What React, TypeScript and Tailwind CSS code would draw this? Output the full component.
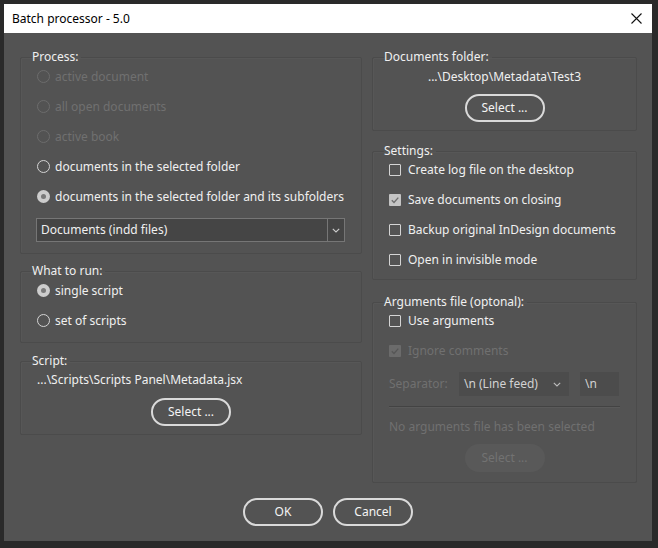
import React from "react";

const FONT = { fontFamily: '"Noto Sans", "Open Sans", Arial, sans-serif' };

function Chevron({ color = "#cfcfcf" }: { color?: string }) {
  return (
    <svg width="8" height="5" viewBox="0 0 8 5" fill="none">
      <path d="M0.8 0.8 L4 4 L7.2 0.8" stroke={color} strokeWidth="1.1" />
    </svg>
  );
}

function Radio({ label, checked = false, disabled = false }: { label: string; checked?: boolean; disabled?: boolean }) {
  return (
    <div className="flex h-[20px] items-center gap-[5px] pt-[1px]">
      {checked ? (
        <span className="flex h-[13px] w-[13px] items-center justify-center rounded-full bg-[#cdcdcd]">
          <span className="h-[5px] w-[5px] rounded-full bg-[#7a7a7a]" />
        </span>
      ) : (
        <span
          className={
            "h-[13px] w-[13px] rounded-full border " +
            (disabled ? "border-[#6c6c6c]" : "border-[#d4d4d4]")
          }
        />
      )}
      <span className={disabled ? "text-[#707070]" : "text-[#f0f0f0]"}>{label}</span>
    </div>
  );
}

function Check({ label, checked = false, disabled = false }: { label: string; checked?: boolean; disabled?: boolean }) {
  return (
    <div className="flex h-[20px] items-center gap-[7px] pt-[1px]">
      {checked ? (
        <span
          className={
            "flex h-[12px] w-[12px] items-center justify-center rounded-[1px] " +
            (disabled ? "bg-[#6b6b6b]" : "bg-[#c4c4c4]")
          }
        >
          <svg width="10" height="10" viewBox="0 0 10 10" fill="none">
            <path
              d="M1.8 5.2 L4 7.4 L8.3 2.6"
              stroke={disabled ? "#575757" : "#6e6e6e"}
              strokeWidth="1.4"
            />
          </svg>
        </span>
      ) : (
        <span className="h-[12px] w-[12px] rounded-[1px] border border-[#d4d4d4]" />
      )}
      <span className={disabled ? "text-[#707070]" : "text-[#f0f0f0]"}>{label}</span>
    </div>
  );
}

function Pill({ children, disabled = false }: { children: React.ReactNode; disabled?: boolean }) {
  return disabled ? (
    <div className="flex h-[28px] w-[80px] items-center justify-center rounded-full bg-[#595959] text-[#727272]">
      {children}
    </div>
  ) : (
    <div className="flex h-[28px] w-[80px] items-center justify-center rounded-full border-2 border-[#dadada] text-[#f4f4f4]">
      {children}
    </div>
  );
}

function Panel({
  title,
  className = "",
  children,
}: {
  title: string;
  className?: string;
  children: React.ReactNode;
}) {
  return (
    <fieldset
      className={
        "rounded-[2px] border border-[#4b4b4b] px-[16px] shadow-[inset_1px_1px_0_#575757] " + className
      }
    >
      <legend className="-ml-[5px] pr-[3px] leading-[16px] text-[#f0f0f0]">{title}</legend>
      {children}
    </fieldset>
  );
}

export default function App() {
  return (
    <div
      className="flex h-[548px] w-[658px] bg-[#2a2a2a] pb-[7px] pl-[4px] pr-[6px] pt-[4px] text-[12px] leading-[16px]"
      style={FONT}
    >
      <div className="flex flex-1 flex-col bg-[#535353]">
        {/* Title bar */}
        <div className="flex h-[29px] items-center justify-between bg-white pl-[8px] pr-[10px] text-[12px] text-black">
          <span>Batch processor - 5.0</span>
          <svg width="11" height="11" viewBox="0 0 11 11" fill="none">
            <path d="M0.5 0.5 L10.5 10.5 M10.5 0.5 L0.5 10.5" stroke="#111" strokeWidth="1.1" />
          </svg>
        </div>

        {/* Body */}
        <div className="flex gap-[10px] pl-[16px] pr-[15px] pt-[16px]">
          {/* Left column */}
          <div className="flex w-[342px] flex-col">
            <Panel title="Process:" className="pb-[11px]">
              <div className="flex flex-col gap-[10px] pt-[1px]">
                <Radio label="active document" disabled />
                <Radio label="all open documents" disabled />
                <Radio label="active book" disabled />
                <Radio label="documents in the selected folder" />
                <Radio label="documents in the selected folder and its subfolders" checked />
              </div>
              <div className="-ml-px mt-[12px] flex h-[24px] border border-[#767676] bg-[#454545]">
                <div className="flex flex-1 items-center pl-[4px] text-[#f0f0f0]">Documents (indd files)</div>
                <div className="flex w-[17px] items-center justify-center border-l border-[#767676]">
                  <Chevron />
                </div>
              </div>
            </Panel>

            <Panel title="What to run:" className="mt-[9px] pb-[12px]">
              <div className="flex flex-col gap-[10px] pt-[1px]">
                <Radio label="single script" checked />
                <Radio label="set of scripts" />
              </div>
            </Panel>

            <Panel title="Script:" className="mt-[10px] pb-[8px]">
              <div className="flex h-[20px] items-center pt-[2px] text-[#f0f0f0]">
                ...\Scripts\Scripts Panel\Metadata.jsx
              </div>
              <div className="mt-[9px] flex justify-center">
                <Pill>Select ...</Pill>
              </div>
            </Panel>
          </div>

          {/* Right column */}
          <div className="flex w-[265px] flex-col">
            <Panel title="Documents folder:" className="pb-[8px]">
              <div className="mt-[1px] flex h-[20px] items-center justify-center pt-[1px] text-[#f0f0f0]">
                ...\Desktop\Metadata\Test3
              </div>
              <div className="mt-[8px] flex justify-center">
                <Pill>Select ...</Pill>
              </div>
            </Panel>

            <Panel title="Settings:" className="mt-[12px] pb-[10px]">
              <div className="flex flex-col gap-[10px]">
                <Check label="Create log file on the desktop" />
                <Check label="Save documents on closing" checked />
                <Check label="Backup original InDesign documents" />
                <Check label="Open in invisible mode" />
              </div>
            </Panel>

            <Panel title="Arguments file (optonal):" className="mt-[14px] pb-[10px]">
              <div className="flex flex-col gap-[10px]">
                <Check label="Use arguments" />
                <Check label="Ignore comments" checked disabled />
              </div>
              <div className="mt-[12px] flex h-[24px] items-center">
                <span className="w-[70px] text-[#707070]">Separator:</span>
                <div className="flex h-[24px] w-[110px] items-center justify-between bg-[#4c4c4c] pl-[5px] pr-[8px] text-[#d2d2d2]">
                  <span>\n (Line feed)</span>
                  <Chevron color="#bdbdbd" />
                </div>
                <div className="ml-[11px] flex h-[24px] w-[39px] items-center bg-[#4c4c4c] pl-[5px] text-[#d2d2d2]">
                  \n
                </div>
              </div>
              <div className="mt-[10px] h-[2px] border-b border-t border-b-[#5a5a5a] border-t-[#434343]" />
              <div className="mt-[9px] flex h-[20px] items-center text-[#707070]">
                No arguments file has been selected
              </div>
              <div className="mt-[7px] flex justify-center">
                <Pill disabled>Select ...</Pill>
              </div>
            </Panel>
          </div>
        </div>

        {/* Footer */}
        <div className="mt-[15px] flex justify-center gap-[10px]">
          <Pill>OK</Pill>
          <Pill>Cancel</Pill>
        </div>
      </div>
    </div>
  );
}
